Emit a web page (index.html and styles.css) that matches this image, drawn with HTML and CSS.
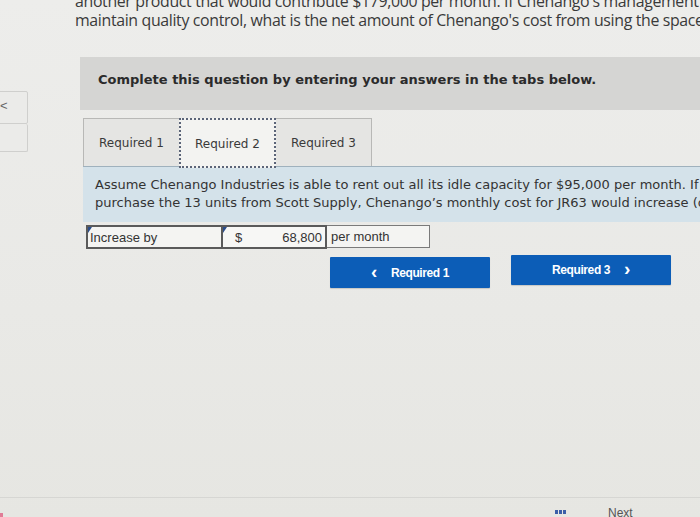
FILE: index.html
```html
<!DOCTYPE html>
<html>
<head>
<meta charset="utf-8">
<link rel="stylesheet" href="styles.css">
</head>
<body>
<div class="page">
  <div class="intro">
    <p>another product that would contribute $179,000 per month. If Chenango's management decides to</p>
    <p>maintain quality control, what is the net amount of Chenango's cost from using the space to</p>
  </div>
  <div class="layout">
    <aside class="side">
      <div class="side-box"><span class="side-arrow">&lt;</span></div>
      <div class="side-box second"></div>
    </aside>
    <main class="content">
      <div class="banner">Complete this question by entering your answers in the tabs below.</div>
      <div class="tabs">
        <div class="tab">Required 1</div>
        <div class="tab active">Required 2</div>
        <div class="tab">Required 3</div>
      </div>
      <div class="panel">
        <p>Assume Chenango Industries is able to rent out all its idle capacity for $95,000 per month. If Chenango decides to</p>
        <p>purchase the 13 units from Scott Supply, Chenango’s monthly cost for JR63 would increase (decrease) by:</p>
      </div>
      <div class="answer">
        <div class="cell label"><span class="mark"></span>Increase by</div>
        <div class="cell value"><span class="mark"></span><span class="dollar">$</span><span class="num">68,800</span></div>
        <div class="cell unit">per month</div>
      </div>
      <div class="nav">
        <button class="btn prev"><span class="chev">&lsaquo;</span><span>Required 1</span></button>
        <button class="btn next"><span>Required 3</span><span class="chev">&rsaquo;</span></button>
      </div>
    </main>
  </div>
  <div class="footer">
    <span class="pink"></span>
    <span class="grid-icon"><i></i><i></i><i></i></span>
    <span class="next-text">Next</span>
  </div>
</div>
</body>
</html>
```
FILE: styles.css
```css
html, body {
  margin: 0;
  padding: 0;
}
body {
  width: 700px;
  height: 517px;
  overflow: hidden;
  background: linear-gradient(180deg, #ededeb 0%, #e9e9e6 60%, #e6e6e2 100%);
}
.page {
  position: relative;
  height: 517px;
  overflow: hidden;
}
.intro {
  margin-top: -8px;
  padding-left: 75px;
  white-space: nowrap;
  font-family: "Open Sans", "Liberation Sans", sans-serif;
  font-size: 15.9px;
  letter-spacing: -0.35px;
  color: #3a3a3a;
  line-height: 19px;
}
.intro p {
  margin: 0;
}
.layout {
  display: flex;
  margin-top: 27px;
}
.side {
  width: 28px;
  flex: none;
  padding-top: 34px;
}
.side-box {
  height: 31px;
  margin-left: -6px;
  border: 1px solid #cfcfcd;
  border-radius: 2px;
  background: #ebebe9;
  position: relative;
}
.side-box.second {
  height: 27px;
  border-top: none;
}
.side-arrow {
  position: absolute;
  left: 5px;
  top: 6px;
  font-family: "Liberation Sans", sans-serif;
  font-size: 13px;
  color: #666;
}
.content {
  margin-left: 52px;
  flex: 1;
  min-width: 0;
}
.banner {
  background: #d5d5d3;
  height: 53px;
  box-sizing: border-box;
  padding: 15px 0 0 18px;
  font-family: "DejaVu Sans", Verdana, sans-serif;
  font-weight: bold;
  font-size: 13px;
  color: #2b2b2b;
  white-space: nowrap;
  margin-right: -20px;
}
.tabs {
  display: flex;
  margin: 8px 0 0 3px;
  width: 289px;
  height: 48px;
  box-sizing: border-box;
  border: 1px solid #b8b8b6;
  border-bottom: none;
  background: #e5e5e3;
  position: relative;
  z-index: 1;
}
.tab {
  width: 95px;
  display: flex;
  align-items: center;
  justify-content: center;
  font-family: "DejaVu Sans", Verdana, sans-serif;
  font-size: 12px;
  color: #3a3a3a;
  padding-top: 1px;
}
.tab.active {
  width: 97px;
  height: 50px;
  margin-top: -1px;
  box-sizing: border-box;
  background: #f3f3f1;
  border: 2px dotted #5b6478;
}
.panel {
  margin-left: 3px;
  background: #d4e2ea;
  border-top: 1px solid #9fb1bd;
  padding: 9px 0 10px 12px;
  font-family: "DejaVu Sans", Verdana, sans-serif;
  font-size: 13px;
  line-height: 18px;
  color: #333;
  white-space: nowrap;
  margin-right: -60px;
}
.panel p {
  margin: 0;
}
.answer {
  display: flex;
  margin: 3px 0 0 6px;
  height: 24px;
  font-family: "Liberation Sans", Arial, sans-serif;
  font-size: 13px;
  color: #333;
}
.cell {
  position: relative;
  box-sizing: border-box;
  height: 24px;
  display: flex;
  align-items: center;
  background: #f4f4f2;
}
.mark {
  position: absolute;
  left: 0;
  top: 0;
  width: 0;
  height: 0;
  border-top: 6px solid #2b4d8a;
  border-right: 4px solid transparent;
}
.label {
  width: 137px;
  border: 2px solid #5a5a5a;
  padding-left: 2px;
}
.value {
  width: 104px;
  border: 2px solid #5a5a5a;
  border-left: none;
  padding: 0 3px 0 12px;
  background: #f7f7f5;
}
.dollar {
  flex: 1;
}
.num {
  text-align: right;
}
.unit {
  width: 103px;
  border: 1px solid #7a7a7a;
  border-left: none;
  padding-left: 4px;
  height: 23px;
  align-self: flex-start;
}
.nav {
  display: flex;
  gap: 21px;
  margin: 8px 0 0 250px;
  align-items: flex-start;
}
.btn {
  width: 160px;
  height: 31px;
  border: none;
  border-radius: 1px;
  background: #0c5db7;
  color: #fff;
  font-family: "Liberation Sans", Arial, sans-serif;
  font-weight: bold;
  font-size: 12px;
  letter-spacing: -0.4px;
  display: flex;
  align-items: center;
  justify-content: center;
  gap: 14px;
  padding: 0;
  box-shadow: 0 1px 1px rgba(0,0,0,0.15);
}
.btn.next {
  margin-top: -2px;
  height: 30px;
}
.chev {
  font-size: 19px;
  font-weight: bold;
  line-height: 1;
  margin-top: -3px;
}
.footer {
  position: absolute;
  left: 0;
  right: 0;
  top: 497px;
  height: 20px;
  border-top: 1px solid #d6d6d3;
}
.pink {
  position: absolute;
  left: 0;
  top: 15px;
  width: 3px;
  height: 5px;
  background: #e07c96;
}
.grid-icon {
  position: absolute;
  left: 555px;
  top: 12px;
  display: flex;
  gap: 1px;
}
.grid-icon i {
  width: 3px;
  height: 4px;
  background: #3b5ea8;
}
.next-text {
  position: absolute;
  left: 608px;
  top: 8px;
  font-family: "Liberation Sans", Arial, sans-serif;
  font-size: 12px;
  color: #555;
}
```
